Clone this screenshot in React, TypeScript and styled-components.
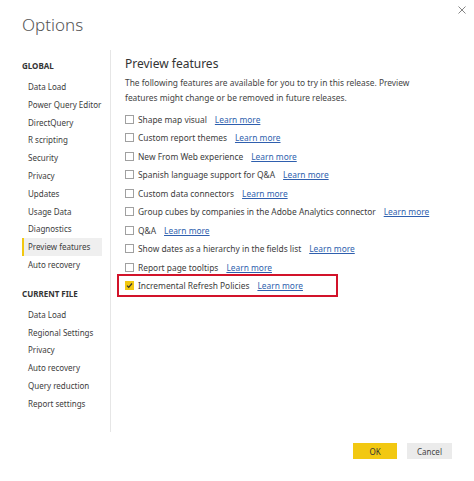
import styled, { createGlobalStyle } from "styled-components";

const GlobalStyle = createGlobalStyle`
  html, body {
    margin: 0;
    padding: 0;
    background: #fff;
  }
  body {
    font-family: "Noto Sans", "Open Sans", sans-serif;
  }
`;

const Dialog = styled.div`
  width: 474px;
  height: 481px;
  display: flex;
  flex-direction: column;
  background: #fff;
  color: #444;
  overflow: hidden;
`;

const Header = styled.div`
  height: 50px;
  display: flex;
  justify-content: space-between;
  align-items: flex-start;
  padding: 0 8px 0 22px;
  box-sizing: border-box;
`;

const Title = styled.h1`
  margin: 0;
  padding-top: 12px;
  font-size: 17px;
  font-weight: 300;
  line-height: 26px;
  color: #555;
`;

const CloseButton = styled.button`
  margin-top: 6px;
  width: 8px;
  height: 8px;
  padding: 0;
  border: none;
  background: none;
  display: flex;
`;

const Body = styled.div`
  display: flex;
  height: 382px;
`;

const Sidebar = styled.nav`
  width: 111px;
  flex-shrink: 0;
  box-sizing: border-box;
  border-right: 1px solid #e6e6e6;
  padding: 9px 8px 0 22px;
`;

const SectionLabel = styled.div<{ $first?: boolean }>`
  margin: ${(p) => (p.$first ? "0" : "13px")} 0 5px;
  font-size: 8px;
  font-weight: 700;
  line-height: 14px;
  color: #333;
`;

const NavItem = styled.div<{ $active?: boolean }>`
  height: 17.8px;
  line-height: 17.8px;
  font-size: 8px;
  color: #3d3d3d;
  white-space: nowrap;
  box-sizing: border-box;
  padding-left: ${(p) => (p.$active ? "4px" : "6px")};
  border-left: ${(p) => (p.$active ? "2px solid #f2c811" : "none")};
  background: ${(p) => (p.$active ? "#efefef" : "transparent")};
`;

const Content = styled.main`
  flex: 1;
  padding: 5px 14px 0;
`;

const Heading = styled.h2`
  margin: 0 0 3px;
  font-size: 12px;
  font-weight: 400;
  line-height: 18px;
  color: #333;
`;

const Description = styled.p`
  margin: 0 0 5px;
  font-size: 8.4px;
  line-height: 14.5px;
  color: #444;
  white-space: nowrap;
`;

const FeatureRow = styled.div<{ $highlight?: boolean }>`
  position: relative;
  display: flex;
  align-items: center;
  gap: 4px;
  height: 18.5px;
  font-size: 8.4px;
  color: #3d3d3d;
  white-space: nowrap;

  &::after {
    content: "";
    display: ${(p) => (p.$highlight ? "block" : "none")};
    position: absolute;
    left: -8px;
    top: -2.5px;
    width: 221px;
    height: 23px;
    box-sizing: border-box;
    border: 2px solid #d2132a;
  }
`;

const Box = styled.span<{ $checked?: boolean }>`
  width: 9px;
  height: 9px;
  box-sizing: border-box;
  flex-shrink: 0;
  display: flex;
  align-items: center;
  justify-content: center;
  border: ${(p) => (p.$checked ? "none" : "1px solid #a0a0a0")};
  background: ${(p) => (p.$checked ? "#f2c811" : "#fff")};
`;

const LearnMore = styled.a`
  margin-left: 4px;
  color: #2f5fae;
  text-decoration: underline;
  cursor: pointer;
`;

const Footer = styled.div`
  flex: 1;
  display: flex;
  justify-content: flex-end;
  align-items: flex-start;
  gap: 10px;
  padding: 11px 22px 0 0;
`;

const Button = styled.button<{ $primary?: boolean }>`
  width: ${(p) => (p.$primary ? "44px" : "45px")};
  height: 16px;
  padding: 0;
  border: none;
  font-family: inherit;
  font-size: 8px;
  color: ${(p) => (p.$primary ? "#333" : "#444")};
  background: ${(p) => (p.$primary ? "#f2c811" : "#ebebeb")};
`;

const globalItems = [
  "Data Load",
  "Power Query Editor",
  "DirectQuery",
  "R scripting",
  "Security",
  "Privacy",
  "Updates",
  "Usage Data",
  "Diagnostics",
  "Preview features",
  "Auto recovery",
];

const fileItems = [
  "Data Load",
  "Regional Settings",
  "Privacy",
  "Auto recovery",
  "Query reduction",
  "Report settings",
];

const features = [
  "Shape map visual",
  "Custom report themes",
  "New From Web experience",
  "Spanish language support for Q&A",
  "Custom data connectors",
  "Group cubes by companies in the Adobe Analytics connector",
  "Q&A",
  "Show dates as a hierarchy in the fields list",
  "Report page tooltips",
  "Incremental Refresh Policies",
];

function App() {
  return (
    <Dialog>
      <GlobalStyle />
      <Header>
        <Title>Options</Title>
        <CloseButton aria-label="Close">
          <svg width="8" height="8" viewBox="0 0 8 8">
            <path d="M0.5 0.5L7.5 7.5M7.5 0.5L0.5 7.5" stroke="#777" strokeWidth="0.9" />
          </svg>
        </CloseButton>
      </Header>
      <Body>
        <Sidebar>
          <SectionLabel $first>GLOBAL</SectionLabel>
          {globalItems.map((item) => (
            <NavItem key={item} $active={item === "Preview features"}>
              {item}
            </NavItem>
          ))}
          <SectionLabel>CURRENT FILE</SectionLabel>
          {fileItems.map((item) => (
            <NavItem key={item}>{item}</NavItem>
          ))}
        </Sidebar>
        <Content>
          <Heading>Preview features</Heading>
          <Description>
            The following features are available for you to try in this release. Preview
            <br />
            features might change or be removed in future releases.
          </Description>
          {features.map((name) => {
            const on = name === "Incremental Refresh Policies";
            return (
              <FeatureRow key={name} $highlight={on}>
                <Box $checked={on}>
                  {on && (
                    <svg width="7" height="7" viewBox="0 0 7 7">
                      <path d="M1 3.6L2.7 5.3L6 1.5" fill="none" stroke="#333" strokeWidth="1.2" />
                    </svg>
                  )}
                </Box>
                {name}
                <LearnMore>Learn more</LearnMore>
              </FeatureRow>
            );
          })}
        </Content>
      </Body>
      <Footer>
        <Button $primary>OK</Button>
        <Button>Cancel</Button>
      </Footer>
    </Dialog>
  );
}

export default App;
